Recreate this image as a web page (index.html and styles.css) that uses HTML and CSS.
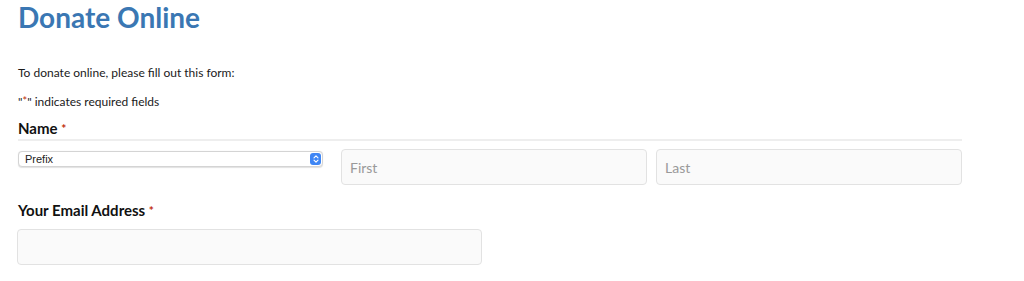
FILE: index.html
```html
<!DOCTYPE html>
<html>
<head>
<meta charset="utf-8">
<link rel="stylesheet" href="styles.css">
</head>
<body>
<div class="page">
  <h1 class="title">Donate Online</h1>
  <p class="intro">To donate online, please fill out this form:</p>
  <p class="req-note">"<span class="star">*</span>" indicates required fields</p>
  <div class="field">
    <div class="label label-rule">Name <span class="star">*</span></div>
    <div class="name-row">
      <div class="select">
        <span class="select-text">Prefix</span>
        <span class="stepper">
          <svg width="10" height="12" viewBox="0 0 10 12"><path d="M2.5 4.5 L5 2 L7.5 4.5 M2.5 7.5 L5 10 L7.5 7.5" fill="none" stroke="#fff" stroke-width="1.4" stroke-linecap="round" stroke-linejoin="round"/></svg>
        </span>
      </div>
      <div class="input first"><span class="ph">First</span></div>
      <div class="input last"><span class="ph">Last</span></div>
    </div>
  </div>
  <div class="field email-field">
    <div class="label">Your Email Address <span class="star">*</span></div>
    <div class="input email"></div>
  </div>
</div>
</body>
</html>
```
FILE: styles.css
```css
html, body {
  margin: 0;
  padding: 0;
  background: #fff;
}
body {
  font-family: Lato, "Open Sans", sans-serif;
  color: #222;
}
.page {
  padding: 0 62px 0 18px;
  width: 944px;
}
.title {
  margin: 0;
  padding-top: 2px;
  font-size: 28px;
  line-height: 30px;
  font-weight: 700;
  color: #3a77b3;
}
.intro {
  margin: 32px 0 0;
  font-size: 12px;
  line-height: 18px;
  color: #1a1a1a;
}
.req-note {
  margin: 10px 0 0;
  font-size: 12px;
  line-height: 18px;
  color: #1a1a1a;
}
.star {
  color: #c02b0a;
  font-size: 11px;
  vertical-align: 1px;
}
.label .star {
  font-size: 12px;
}
.field {
  margin-top: 8px;
}
.label {
  font-size: 15px;
  font-weight: 700;
  line-height: 18px;
  color: #111;
}
.label-rule {
  border-bottom: 2px solid #eeeeee;
  padding-bottom: 1px;
}
.name-row {
  display: flex;
  align-items: flex-start;
  margin-top: 8px;
}
.select {
  box-sizing: border-box;
  width: 305px;
  height: 16px;
  margin-top: 2px;
  margin-right: 18px;
  border: 1px solid #d4d4d4;
  border-radius: 4px;
  background: #fff;
  box-shadow: 0 0.5px 1px rgba(0,0,0,0.12);
  display: flex;
  align-items: center;
  justify-content: space-between;
  padding: 0 1px 0 6px;
}
.select-text {
  font-family: "Liberation Sans", Arial, sans-serif;
  font-size: 11px;
  color: #222;
}
.stepper {
  width: 11px;
  height: 12px;
  background: #3f86f4;
  border-radius: 3px;
  display: flex;
  align-items: center;
  justify-content: center;
}
.stepper svg {
  width: 8px;
  height: 10px;
}
.input {
  box-sizing: border-box;
  height: 36px;
  border: 1px solid #e2e2e2;
  border-radius: 4px;
  background: #fafafa;
  display: flex;
  align-items: center;
  padding: 0 8px;
}
.first {
  width: 306px;
}
.last {
  width: 306px;
  margin-left: 9px;
}
.ph {
  font-size: 14px;
  color: #999;
}
.email-field {
  margin-top: 16px;
}
.email {
  width: 465px;
  margin-top: 9px;
  margin-left: -1px;
}
```
